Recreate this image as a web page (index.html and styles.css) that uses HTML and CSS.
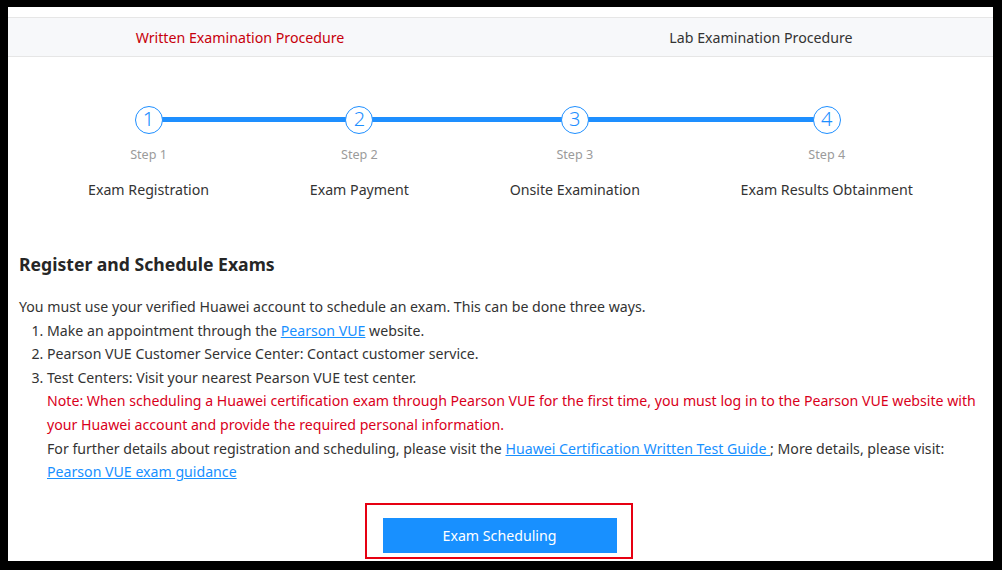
FILE: index.html
```html
<!DOCTYPE html>
<html>
<head>
<meta charset="utf-8">
<link rel="stylesheet" href="styles.css">
</head>
<body>
<div class="frame">
  <div class="panel">
    <div class="tabs">
      <div class="tab active">Written Examination Procedure</div>
      <div class="tab">Lab Examination Procedure</div>
    </div>
    <div class="steps">
      <div class="step">
        <div class="circle">1</div>
        <div class="step-no">Step 1</div>
        <div class="step-name">Exam Registration</div>
      </div>
      <div class="step">
        <div class="circle">2</div>
        <div class="step-no">Step 2</div>
        <div class="step-name">Exam Payment</div>
      </div>
      <div class="step">
        <div class="circle">3</div>
        <div class="step-no">Step 3</div>
        <div class="step-name">Onsite Examination</div>
      </div>
      <div class="step">
        <div class="circle">4</div>
        <div class="step-no">Step 4</div>
        <div class="step-name">Exam Results Obtainment</div>
      </div>
    </div>
    <div class="content">
      <h2 class="title">Register and Schedule Exams</h2>
      <p class="text">You must use your verified Huawei account to schedule an exam. This can be done three ways.</p>
      <ol class="list">
        <li>Make an appointment through the <a class="link" href="#">Pearson VUE</a> website.</li>
        <li>Pearson VUE Customer Service Center: Contact customer service.</li>
        <li>Test Centers: Visit your nearest Pearson VUE test center.</li>
      </ol>
      <p class="note">Note: When scheduling a Huawei certification exam through Pearson VUE for the first time, you must log in to the Pearson VUE website with your Huawei account and provide the required personal information.</p>
      <p class="more">For further details about registration and scheduling, please visit the <a class="link" href="#">Huawei Certification Written Test Guide </a>; More details, please visit: <a class="link" href="#">Pearson VUE exam guidance</a></p>
      <div class="btn-wrap">
        <div class="highlight">
          <button class="btn">Exam Scheduling</button>
        </div>
      </div>
    </div>
  </div>
</div>
</body>
</html>
```
FILE: styles.css
```css
* { box-sizing: border-box; }
html, body { margin: 0; padding: 0; }
body {
  background: #000;
  font-family: "Noto Sans", "Open Sans", sans-serif;
  color: #333;
  width: 1002px;
  height: 570px;
  overflow: hidden;
}
.frame {
  padding: 7px 9px 9px 8px;
  height: 570px;
}
.panel {
  background: #fff;
  height: 554px;
  overflow: hidden;
  padding-top: 10px;
}
.tabs {
  display: flex;
  justify-content: space-between;
  height: 40px;
  background: #f7f8fa;
  border-top: 1px solid #e6e6e6;
  border-bottom: 1px solid #e6e6e6;
}
.tab {
  width: 464px;
  display: flex;
  align-items: center;
  justify-content: center;
  font-size: 14.2px;
  color: #333;
}
.tab.active { color: #c7000b; }
.steps {
  position: relative;
  display: flex;
  justify-content: space-between;
  padding: 49px 80px 0;
}
.steps::before {
  content: "";
  position: absolute;
  top: 60px;
  left: 139px;
  right: 159px;
  height: 5px;
  background: #1e8fff;
}
.step {
  position: relative;
  display: flex;
  flex-direction: column;
  align-items: center;
}
.circle {
  width: 28px;
  height: 28px;
  border-radius: 50%;
  border: 1.5px solid #1e8fff;
  background: #fff;
  color: #1e8fff;
  font-size: 20px;
  font-weight: 300;
  line-height: 24px;
  text-align: center;
}
.step-no {
  margin-top: 13px;
  font-size: 12.6px;
  color: #9b9b9b;
  line-height: 16px;
}
.step-name {
  margin-top: 17px;
  font-size: 14.2px;
  color: #333;
  line-height: 20px;
}
.content {
  padding: 52px 11px 0;
  font-size: 14.15px;
  line-height: 23.6px;
}
.title {
  margin: 0 0 19px;
  font-size: 17.6px;
  font-weight: 700;
  line-height: 24px;
  color: #262626;
}
.text { margin: 0; }
.list {
  margin: 0;
  padding-left: 28px;
}
.note {
  margin: 0;
  padding-left: 28px;
  color: #d9001b;
}
.more {
  margin: 0;
  padding-left: 28px;
}
.link {
  color: #1890ff;
  text-decoration: underline;
}
.btn-wrap {
  display: flex;
  justify-content: center;
  padding-top: 19px;
  padding-right: 4px;
}
.highlight {
  border: 2px solid #e60012;
  padding: 13px 14px 4px 16px;
}
.btn {
  width: 234px;
  height: 35px;
  border: none;
  background: #1890ff;
  color: #fff;
  font-family: "Noto Sans", "Open Sans", sans-serif;
  font-size: 14.2px;
  padding: 0;
}
```
